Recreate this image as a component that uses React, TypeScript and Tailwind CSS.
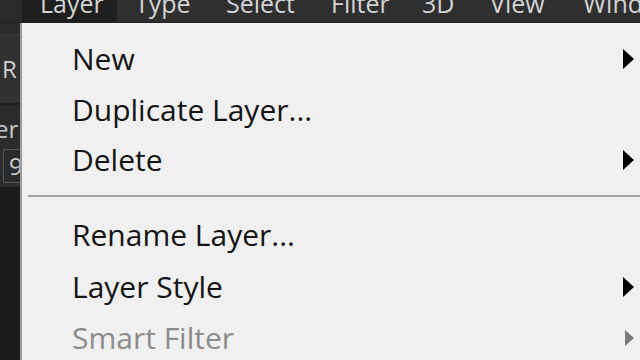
import React from 'react';

const topItems = [
  { label: 'Layer', w: 'w-[95px]', active: true },
  { label: 'Type', w: 'w-[91px]' },
  { label: 'Select', w: 'w-[105px]' },
  { label: 'Filter', w: 'w-[91px]' },
  { label: '3D', w: 'w-[68px]' },
  { label: 'View', w: 'w-[93px]' },
  { label: 'Window', w: 'w-[100px]' },
];

type Item = { label: string; sub?: boolean; disabled?: boolean };

const group1: Item[] = [
  { label: 'New', sub: true },
  { label: 'Duplicate Layer...' },
  { label: 'Delete', sub: true },
];

const group2: Item[] = [
  { label: 'Rename Layer...' },
  { label: 'Layer Style', sub: true },
  { label: 'Smart Filter', sub: true, disabled: true },
];

const Arrow = ({ disabled }: { disabled?: boolean }) =>
  disabled ? (
    <svg width="9" height="16" viewBox="0 0 9 16" className="shrink-0">
      <path d="M0 0 L9 8 L0 16 Z" fill="#7a7a7a" />
    </svg>
  ) : (
    <svg width="11" height="20" viewBox="0 0 11 20" className="shrink-0">
      <path d="M0 0 L11 10 L0 20 Z" fill="#000" />
    </svg>
  );

const MenuRow = ({ item, tall }: { item: Item; tall?: boolean }) => (
  <div className={`flex items-center ${tall ? 'h-[51.5px]' : 'h-[50.5px]'} pl-[50px] pr-[6px]`}>
    <span className={`flex-1 ${item.disabled ? 'text-[#8c8c8c]' : 'text-[#141414]'}`}>{item.label}</span>
    {item.sub && <Arrow disabled={item.disabled} />}
  </div>
);

export default function App() {
  return (
    <div
      className="w-[640px] h-[360px] overflow-hidden bg-[#1b1b1b] flex flex-col"
      style={{ fontFamily: '"Open Sans", "Noto Sans", sans-serif' }}
    >
      {/* menu bar */}
      <div className="h-[23px] shrink-0 bg-[#2f2f2f] flex items-end border-b border-[#222] overflow-hidden">
        <div className="w-[22px] h-full shrink-0 bg-[#2a2a2a]" />
        {topItems.map((t) => (
          <div
            key={t.label}
            className={`${t.w} h-full shrink-0 flex items-end pl-[18px] text-[25px] leading-none text-[#d4d4d4] ${
              t.active ? 'bg-[#1f1f1f]' : ''
            }`}
          >
            <span className="mb-[6px] whitespace-nowrap">{t.label}</span>
          </div>
        ))}
      </div>

      <div className="flex flex-1 min-h-0">
        {/* left tool strip */}
        <div className="w-[20px] shrink-0 flex flex-col bg-[#1b1b1b] overflow-hidden">
          <div className="h-[12px] bg-[#2a2a2a] border-b border-[#3a3a3a]" />
          <div className="h-[70px] bg-[#313131] border-b-2 border-[#202020] flex items-center pl-[2px] text-[24px] text-[#cfcfcf] leading-none">
            R
          </div>
          <div className="h-[42px] bg-[#2b2b2b] flex items-end pb-[6px] text-[24px] text-[#c8c8c8] leading-none -ml-[5px] whitespace-nowrap">
            er
          </div>
          <div className="h-[40px] bg-[#2b2b2b] flex items-center pb-[2px]">
            <div className="h-[34px] w-full border-l border-t border-b border-[#555] ml-[3px] flex items-center pl-[5px] text-[24px] text-[#cfcfcf] leading-none">
              9
            </div>
          </div>
        </div>

        {/* dropdown */}
        <div className="flex-1 bg-[#f0f0f0] border-l-2 border-[#9a9a9a] text-[30px] leading-none pt-[11px]">
          {group1.map((it) => (
            <MenuRow key={it.label} item={it} />
          ))}
          <div className="h-[2px] bg-[#a3a3a3] ml-[6px] mt-[9px] mb-[13px]" />
          {group2.map((it) => (
            <MenuRow key={it.label} item={it} tall />
          ))}
        </div>
      </div>
    </div>
  );
}
